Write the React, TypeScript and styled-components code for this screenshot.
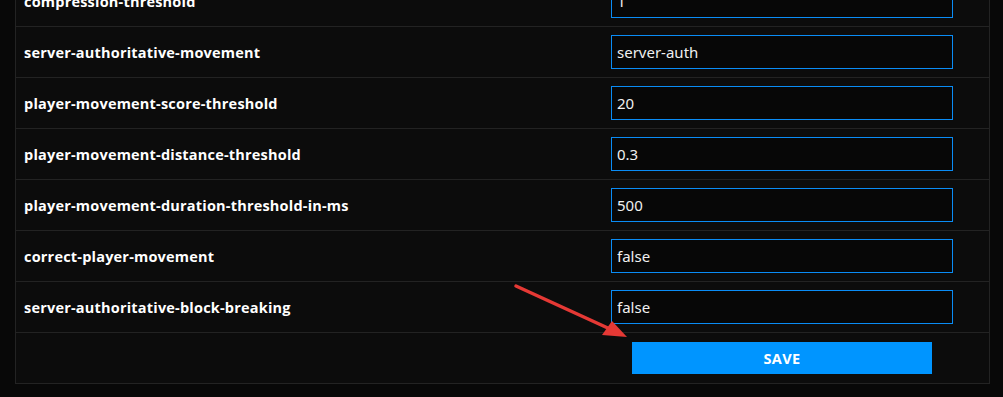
import { createGlobalStyle } from "styled-components";
import styled from "styled-components";

const GlobalStyle = createGlobalStyle`
  html, body {
    margin: 0;
    padding: 0;
    background: #080808;
    overflow: hidden;
  }
  body {
    font-family: "Open Sans", "Noto Sans", sans-serif;
  }
`;

const Page = styled.main`
  position: relative;
  width: 1003px;
  height: 397px;
  overflow: hidden;
  padding: 0 13px 0 15px;
  box-sizing: border-box;
`;

const Panel = styled.section`
  margin-top: -25px;
  width: 975px;
  box-sizing: border-box;
  background: #0c0c0c;
  border: 1px solid #232323;
  border-top: none;
`;

const Row = styled.div`
  display: grid;
  grid-template-columns: 1fr 387px;
  border-top: 1px solid #232323;
`;

const Label = styled.div`
  display: flex;
  align-items: center;
  padding-left: 8px;
  color: #ffffff;
  font-family: "Open Sans", "Noto Sans", sans-serif;
  font-weight: 700;
  font-size: 14.5px;
  letter-spacing: 0.2px;
`;

const ValueCell = styled.div<{ $button?: boolean }>`
  display: flex;
  justify-content: center;
  padding: ${(p) => (p.$button ? "9px 36px 9px 9px" : "8px 36px 8px 9px")};
`;

const Input = styled.input`
  width: 100%;
  height: 34px;
  box-sizing: border-box;
  background: #070707;
  border: 1px solid #0a8cf5;
  border-radius: 0;
  color: #f0f0f0;
  font-family: "Noto Sans", "Open Sans", sans-serif;
  font-size: 15px;
  padding: 0 5px;
  outline: none;
`;

const SaveButton = styled.button`
  width: 300px;
  height: 32px;
  border: none;
  border-radius: 0;
  background: #0095ff;
  color: #ffffff;
  font-family: "Open Sans", "Noto Sans", sans-serif;
  font-weight: 700;
  font-size: 14.5px;
  letter-spacing: 0.4px;
  cursor: pointer;
`;

const Arrow = styled.svg`
  position: absolute;
  left: 0;
  top: 0;
  pointer-events: none;
`;

const settings: [string, string][] = [
  ["compression-threshold", "1"],
  ["server-authoritative-movement", "server-auth"],
  ["player-movement-score-threshold", "20"],
  ["player-movement-distance-threshold", "0.3"],
  ["player-movement-duration-threshold-in-ms", "500"],
  ["correct-player-movement", "false"],
  ["server-authoritative-block-breaking", "false"],
];

export default function App() {
  return (
    <>
      <GlobalStyle />
      <Page>
        <Panel>
          {settings.map(([name, value]) => (
            <Row key={name}>
              <Label>{name}</Label>
              <ValueCell>
                <Input defaultValue={value} type="text" />
              </ValueCell>
            </Row>
          ))}
          <Row>
            <div />
            <ValueCell $button>
              <SaveButton>SAVE</SaveButton>
            </ValueCell>
          </Row>
        </Panel>
        <Arrow width="1003" height="397" viewBox="0 0 1003 397">
          <line x1="516" y1="286" x2="610" y2="329" stroke="#e53935" strokeWidth="3.5" strokeLinecap="round" />
          <polygon points="627,337 602,335 612,321" fill="#e53935" />
        </Arrow>
      </Page>
    </>
  );
}
